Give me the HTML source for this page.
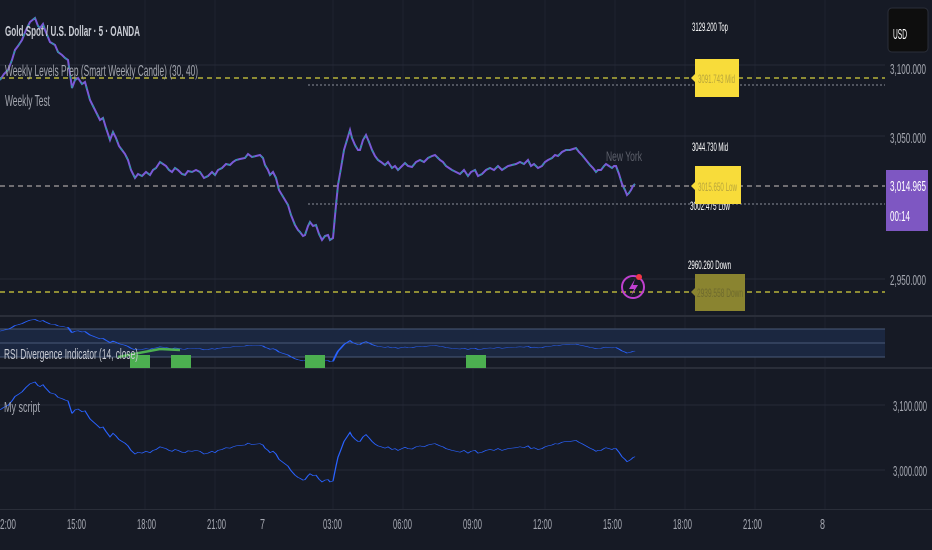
<!DOCTYPE html>
<html><head><meta charset="utf-8"><style>
html,body{margin:0;padding:0;background:#161a25;width:932px;height:550px;overflow:hidden}
svg{display:block}
text{font-family:"Liberation Sans",sans-serif}
</style></head><body>
<svg width="932" height="550" viewBox="0 0 932 550" xmlns="http://www.w3.org/2000/svg">
<defs>
<path id="p" d="M0,80 L4,74 L8,70 L12,60 L15,50 L18,46 L22,40 L26,30 L30,22 L35,18 L38,26 L40,28 L43,24 L45,30 L50,42 L55,45 L58,52 L62,55 L65,58 L68,60 L72,88 L75,80 L78,78 L82,84 L85,82 L90,100 L93,106 L96,112 L100,120 L103,118 L106,128 L110,140 L113,132 L116,138 L119,146 L122,150 L125,154 L128,160 L131,170 L135,178 L138,174 L142,176 L146,172 L150,175 L153,170 L156,168 L160,162 L163,164 L166,166 L169,170 L172,172 L175,168 L178,170 L182,174 L185,175 L188,171 L192,172 L196,170 L200,172 L204,178 L208,176 L212,172 L215,175 L218,170 L222,168 L226,164 L230,165 L233,162 L236,160 L240,159 L245,158 L248,154 L252,157 L256,156 L260,155 L263,158 L265,165 L268,170 L270,175 L273,172 L276,178 L279,190 L282,195 L285,200 L288,205 L291,215 L295,225 L298,230 L300,232 L303,236 L305,235 L308,226 L310,222 L313,226 L316,225 L319,234 L322,240 L325,236 L328,235 L330,240 L333,238 L336,205 L338,185 L341,168 L344,150 L347,140 L350,130 L352,138 L355,145 L358,150 L360,150 L363,140 L366,135 L369,142 L372,150 L375,156 L378,160 L381,162 L385,165 L388,162 L392,168 L395,166 L398,170 L402,166 L405,163 L408,166 L412,167 L416,162 L420,160 L424,162 L428,158 L432,156 L435,155 L438,158 L440,160 L443,162 L446,166 L449,168 L452,170 L456,172 L460,174 L464,170 L468,176 L471,172 L475,170 L478,176 L482,174 L486,170 L490,168 L494,170 L498,166 L502,170 L505,168 L508,166 L512,165 L516,164 L520,162 L524,164 L528,160 L531,166 L534,164 L538,168 L542,166 L545,162 L548,160 L552,158 L555,155 L558,156 L562,152 L566,150 L570,150 L573,149 L576,148 L579,152 L582,155 L586,160 L590,165 L593,168 L596,172 L598,170 L601,170 L604,166 L606,164 L609,166 L612,168 L614,166 L616,166 L619,174 L622,184 L625,190 L627,195 L629,193 L631,190 L633,186 L635,184"/>
</defs>
<g stroke="#1d2130" stroke-width="1">
<line x1="75" y1="0" x2="75" y2="510"/><line x1="145" y1="0" x2="145" y2="510"/><line x1="215" y1="0" x2="215" y2="510"/><line x1="333" y1="0" x2="333" y2="510"/><line x1="403" y1="0" x2="403" y2="510"/><line x1="473" y1="0" x2="473" y2="510"/><line x1="545" y1="0" x2="545" y2="510"/><line x1="615" y1="0" x2="615" y2="510"/><line x1="685" y1="0" x2="685" y2="510"/><line x1="755" y1="0" x2="755" y2="510"/><line x1="825" y1="0" x2="825" y2="510"/>
</g>
<g stroke="#262b38" stroke-width="1">
<line x1="0" y1="65" x2="885" y2="65"/><line x1="0" y1="136" x2="885" y2="136"/><line x1="0" y1="279" x2="885" y2="279"/>
<line x1="0" y1="405" x2="885" y2="405"/><line x1="0" y1="470" x2="885" y2="470"/>
</g>
<line x1="0" y1="78" x2="885" y2="78" stroke="#b5b13a" stroke-width="1.5" stroke-dasharray="5,4"/>
<line x1="308" y1="85" x2="885" y2="85" stroke="#8a8e99" stroke-width="1" stroke-dasharray="2,2"/>
<line x1="0" y1="186" x2="885" y2="186" stroke="#8e8a8c" stroke-width="1.5" stroke-dasharray="5,4"/>
<line x1="308" y1="204" x2="885" y2="204" stroke="#8a8e99" stroke-width="1" stroke-dasharray="2,2"/>
<line x1="0" y1="292" x2="885" y2="292" stroke="#b5b13a" stroke-width="1.5" stroke-dasharray="5,4"/>
<use href="#p" fill="none" stroke="#7a5ad8" stroke-width="2"/>
<use href="#p" fill="none" stroke="#22a69a" stroke-width="1.2" stroke-dasharray="3,7"/>
<text x="606" y="161" fill="#5d606b" font-size="14" textLength="36" lengthAdjust="spacingAndGlyphs">New York</text>
<text x="5" y="36" fill="#c8cbd3" font-size="15" font-weight="bold" textLength="135" lengthAdjust="spacingAndGlyphs">Gold Spot / U.S. Dollar · 5 · OANDA</text>
<text x="5" y="76" fill="#a3a6af" font-size="16" textLength="193" lengthAdjust="spacingAndGlyphs">Weekly Levels Prep (Smart Weekly Candle) (30, 40)</text>
<text x="5" y="106" fill="#a3a6af" font-size="16" textLength="45" lengthAdjust="spacingAndGlyphs">Weekly Test</text>
<text x="692" y="31" fill="#fff" font-size="12" textLength="36" lengthAdjust="spacingAndGlyphs">3129.200 Top</text>
<path d="M695,59 H739 V97 H695 V82 L691,78 L695,74 Z" fill="#f8dc3a"/>
<text x="698" y="83" fill="#b8a53c" font-size="12" textLength="37" lengthAdjust="spacingAndGlyphs">3091.743 Mid</text>
<text x="692" y="151" fill="#fff" font-size="12" textLength="36" lengthAdjust="spacingAndGlyphs">3044.730 Mid</text>
<text x="690" y="210" fill="#fff" font-size="12" textLength="40" lengthAdjust="spacingAndGlyphs">3002.475 Low</text>
<path d="M695,166 H741 V204 H695 V190 L691,186 L695,182 Z" fill="#f8dc3a"/>
<text x="698" y="191" fill="#b8a53c" font-size="12" textLength="39" lengthAdjust="spacingAndGlyphs">3015.650 Low</text>
<text x="688" y="269" fill="#fff" font-size="12" textLength="43" lengthAdjust="spacingAndGlyphs">2960.260 Down</text>
<path d="M695,274 H745 V311 H695 V296 L691,292 L695,288 Z" fill="#8a8430"/>
<text x="697" y="297" fill="#6e6a2e" font-size="12" textLength="46" lengthAdjust="spacingAndGlyphs">2939.558 Down</text>
<circle cx="633" cy="287" r="11" fill="none" stroke="#c040d0" stroke-width="2"/>
<path d="M635,279 L629,289 L634,289 L631,296 L638,285 L633,285 Z" fill="#c040d0"/>
<circle cx="639" cy="277" r="3" fill="#f23645"/>
<rect x="888" y="8" width="40" height="44" rx="4" fill="#0e0e0e" stroke="#2a2e39"/>
<text x="893" y="39" fill="#fff" font-size="15" textLength="14" lengthAdjust="spacingAndGlyphs">USD</text>
<text x="890" y="74" fill="#a3a6af" font-size="15" textLength="36" lengthAdjust="spacingAndGlyphs">3,100.000</text>
<text x="890" y="143" fill="#a3a6af" font-size="15" textLength="36" lengthAdjust="spacingAndGlyphs">3,050.000</text>
<text x="890" y="285" fill="#a3a6af" font-size="15" textLength="36" lengthAdjust="spacingAndGlyphs">2,950.000</text>
<rect x="886" y="170" width="42" height="61" fill="#7e57c2"/>
<text x="890" y="191" fill="#fff" font-size="15" textLength="36" lengthAdjust="spacingAndGlyphs">3,014.965</text>
<text x="890" y="221" fill="#fff" font-size="15" textLength="20" lengthAdjust="spacingAndGlyphs">00:14</text>
<rect x="0" y="315" width="932" height="2" fill="#2a2e39"/>
<rect x="0" y="367" width="932" height="2" fill="#2a2e39"/>
<rect x="0" y="329" width="885" height="28" fill="#1b2740"/>
<g stroke="#4a5a78" stroke-width="1"><line x1="0" y1="329" x2="885" y2="329"/><line x1="0" y1="343" x2="885" y2="343"/><line x1="0" y1="357" x2="885" y2="357"/></g>
<use href="#p" transform="translate(0,316) scale(1,0.19)" fill="none" stroke="#2962ff" stroke-width="2"/>
<path d="M118,357 L160,349 L180,350" fill="none" stroke="#4caf50" stroke-width="2.5"/>
<rect x="130" y="355" width="20" height="13" fill="#4caf50"/><rect x="171" y="355" width="20" height="13" fill="#4caf50"/>
<rect x="305" y="355" width="20" height="13" fill="#4caf50"/><rect x="466" y="355" width="20" height="13" fill="#4caf50"/>
<text x="4" y="359" fill="#c8cbd3" font-size="15" textLength="134" lengthAdjust="spacingAndGlyphs">RSI Divergence Indicator (14, close)</text>
<use href="#p" transform="translate(0,373.9) scale(1,0.45)" fill="none" stroke="#2962ff" stroke-width="1.3"/>
<text x="4" y="412" fill="#a3a6af" font-size="15" textLength="36" lengthAdjust="spacingAndGlyphs">My script</text>
<text x="893" y="411" fill="#a3a6af" font-size="15" textLength="34" lengthAdjust="spacingAndGlyphs">3,100.000</text>
<text x="893" y="476" fill="#a3a6af" font-size="15" textLength="34" lengthAdjust="spacingAndGlyphs">3,000.000</text>
<rect x="0" y="509" width="932" height="1" fill="#2a2e39"/>
<g fill="#a3a6af" font-size="15">
<text x="0" y="529" textLength="16" lengthAdjust="spacingAndGlyphs">2:00</text>
<text x="67" y="529" textLength="19" lengthAdjust="spacingAndGlyphs">15:00</text>
<text x="137" y="529" textLength="19" lengthAdjust="spacingAndGlyphs">18:00</text>
<text x="207" y="529" textLength="19" lengthAdjust="spacingAndGlyphs">21:00</text>
<text x="260" y="529" textLength="5" lengthAdjust="spacingAndGlyphs">7</text>
<text x="323" y="529" textLength="19" lengthAdjust="spacingAndGlyphs">03:00</text>
<text x="393" y="529" textLength="19" lengthAdjust="spacingAndGlyphs">06:00</text>
<text x="463" y="529" textLength="19" lengthAdjust="spacingAndGlyphs">09:00</text>
<text x="533" y="529" textLength="19" lengthAdjust="spacingAndGlyphs">12:00</text>
<text x="603" y="529" textLength="19" lengthAdjust="spacingAndGlyphs">15:00</text>
<text x="673" y="529" textLength="19" lengthAdjust="spacingAndGlyphs">18:00</text>
<text x="743" y="529" textLength="19" lengthAdjust="spacingAndGlyphs">21:00</text>
<text x="820" y="529" textLength="5" lengthAdjust="spacingAndGlyphs">8</text>
</g>
</svg>
</body></html>
